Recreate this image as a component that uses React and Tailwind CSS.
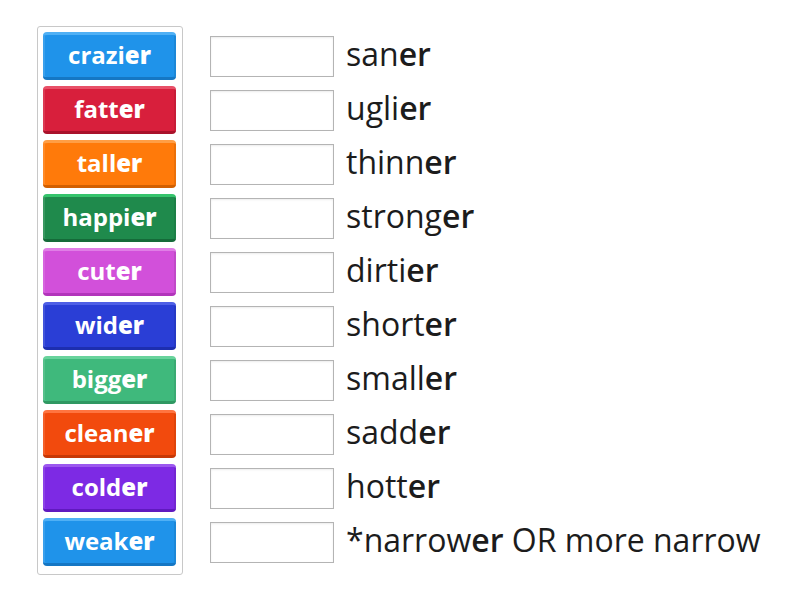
const TILES = [
  { stem: 'crazi', bg: 'bg-[#1f93ea]', top: 'border-t-[#4fb0f5]', bottom: 'border-b-[#1577c4]' },
  { stem: 'fatt', bg: 'bg-[#d81f3c]', top: 'border-t-[#e85068]', bottom: 'border-b-[#a9122b]' },
  { stem: 'tall', bg: 'bg-[#ff7a0a]', top: 'border-t-[#ff9e45]', bottom: 'border-b-[#d25f00]' },
  { stem: 'happi', bg: 'bg-[#1f8a4c]', top: 'border-t-[#35c46c]', bottom: 'border-b-[#156a39]' },
  { stem: 'cut', bg: 'bg-[#d250da]', top: 'border-t-[#e07ee6]', bottom: 'border-b-[#b234bb]' },
  { stem: 'wid', bg: 'bg-[#2a3ed6]', top: 'border-t-[#4e5fe6]', bottom: 'border-b-[#1d2eaf]' },
  { stem: 'bigg', bg: 'bg-[#3fb97c]', top: 'border-t-[#68d39c]', bottom: 'border-b-[#2f9862]' },
  { stem: 'clean', bg: 'bg-[#f24a0d]', top: 'border-t-[#ff7440]', bottom: 'border-b-[#c73806]' },
  { stem: 'cold', bg: 'bg-[#7d2ae4]', top: 'border-t-[#9c58ee]', bottom: 'border-b-[#6019bf]' },
  { stem: 'weak', bg: 'bg-[#1f93ea]', top: 'border-t-[#4fb0f5]', bottom: 'border-b-[#1577c4]' },
];

const TARGETS = ['san', 'ugli', 'thinn', 'strong', 'dirti', 'short', 'small', 'sadd', 'hott'];

const Tile = ({ stem, bg, top, bottom }) => (
  <div
    className={`flex h-[48px] w-[133px] items-center justify-center rounded-[4px] border-t-[3px] border-b-[3px] ${bg} ${top} ${bottom} pb-[3px] text-[24px] font-bold text-white shadow-[inset_2px_0_0_rgba(255,255,255,0.12),inset_-2px_0_0_rgba(0,0,0,0.08)]`}
  >
    <span className="leading-none">
      {stem}
      <span className="font-extrabold">er</span>
    </span>
  </div>
);

const Row = ({ children }) => (
  <div className="flex h-[48px] items-center">
    <div className="h-[41px] w-[124px] border border-[#b4b4b4] bg-white shadow-[inset_0_1px_2px_rgba(0,0,0,0.08)]" />
    <div className="ml-[12px] pb-[5px] text-[32px] leading-none text-[#1c1c1c]">{children}</div>
  </div>
);

export default function App() {
  return (
    <div
      className="h-[600px] w-[800px] bg-white"
      style={{ fontFamily: '"Open Sans", "Liberation Sans", sans-serif' }}
    >
      <div className="flex pl-[37px] pt-[26px]">
        <div className="flex w-[146px] flex-col gap-[6px] rounded-[3px] border border-[#c8c8c8] px-[5px] pt-[5px] pb-[8px]">
          {TILES.map((t) => (
            <Tile key={t.stem} {...t} />
          ))}
        </div>
        <div className="ml-[27px] flex flex-col gap-[6px] pt-[6px]">
          {TARGETS.map((s) => (
            <Row key={s}>
              {s}
              <span className="font-semibold">er</span>
            </Row>
          ))}
          <Row>
            *narrow<span className="font-semibold">er</span> OR more narrow
          </Row>
        </div>
      </div>
    </div>
  );
}
